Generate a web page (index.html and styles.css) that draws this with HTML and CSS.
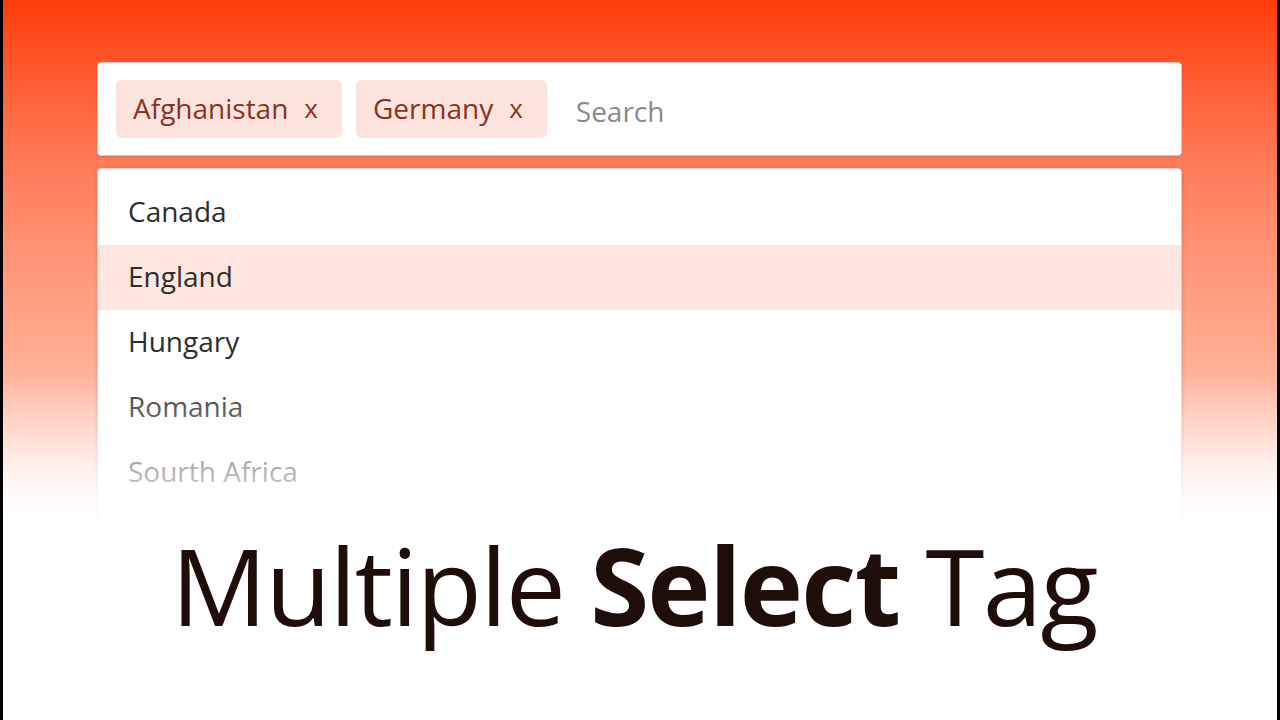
FILE: index.html
```html
<!DOCTYPE html>
<html>
<head>
<meta charset="utf-8">
<link rel="stylesheet" href="styles.css">
</head>
<body>
<div class="page">
  <div class="stage">
    <div class="select">
      <span class="chip"><span class="chip-label">Afghanistan</span><span class="chip-x">x</span></span>
      <span class="chip"><span class="chip-label">Germany</span><span class="chip-x">x</span></span>
      <span class="search">Search</span>
    </div>
    <ul class="dropdown">
      <li class="item">Canada</li>
      <li class="item active">England</li>
      <li class="item">Hungary</li>
      <li class="item">Romania</li>
      <li class="item">Sourth Africa</li>
    </ul>
    <div class="fade"></div>
  </div>
  <h1 class="title">Multiple <b>Select</b> Tag</h1>
</div>
</body>
</html>
```
FILE: styles.css
```css
html, body {
  margin: 0;
  padding: 0;
  background: #000;
}
.page {
  width: 1274px;
  height: 720px;
  margin: 0 auto;
  background: linear-gradient(#ff3d0b 0px, #ff5428 60px, #ff7a58 160px, #ff9373 250px, #ffab90 350px, #ffc4b2 430px, #ffffff 535px, #ffffff 720px);
  font-family: "Open Sans", "Noto Sans", sans-serif;
  overflow: hidden;
}
.stage {
  position: relative;
  padding: 62px 95px 0 94px;
  height: 471px;
  overflow: hidden;
}
.select {
  height: 94px;
  box-sizing: border-box;
  background: #fff;
  border: 1px solid #e2c8c0;
  border-radius: 4px;
  box-shadow: 0 1px 2px rgba(0,0,0,0.12);
  display: flex;
  align-items: center;
  padding: 0 18px;
  gap: 14px;
}
.chip {
  height: 58px;
  box-sizing: border-box;
  background: #fde3dd;
  border-radius: 6px;
  display: flex;
  align-items: center;
  padding: 0 24px 2px 17px;
  color: #8b3222;
  font-size: 28px;
}
.chip-x {
  margin-left: 16px;
  font-size: 26px;
}
.search {
  margin-left: 15px;
  color: #8a8a8a;
  font-size: 28px;
  margin-top: 3px;
}
.dropdown {
  list-style: none;
  margin: 12px 0 0 0;
  padding: 11px 0 40px 0;
  background: #fff;
  border: 1px solid #e0d0cc;
  border-radius: 4px;
  box-shadow: 0 1px 4px rgba(0,0,0,0.18);
}
.item {
  height: 65px;
  box-sizing: border-box;
  display: flex;
  align-items: center;
  padding: 0 0 4px 30px;
  font-size: 28px;
  color: #2e2e2e;
}
.active {
  background: #fde5e0;
}
.fade {
  position: absolute;
  left: 0;
  right: 0;
  top: 375px;
  height: 160px;
  background: linear-gradient(rgba(255,255,255,0), #ffffff 95%);
}
.title {
  margin: 0;
  text-align: center;
  font-weight: 400;
  font-size: 107px;
  line-height: 1;
  color: #1e0d08;
  letter-spacing: -1.7px;
  padding-right: 12px;
  margin-top: -2px;
}
.title b {
  font-weight: 700;
}
```
